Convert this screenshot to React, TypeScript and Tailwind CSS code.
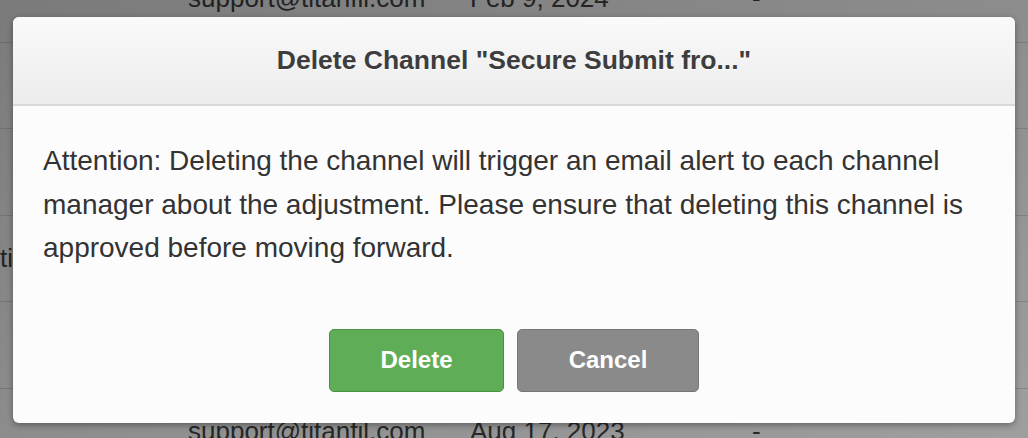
import React from "react";

const rows = [
  { a: "", email: "support@titanfil.com", date: "Feb 9, 2024", c: "-" },
  { a: "", email: "", date: "", c: "" },
  { a: "", email: "", date: "", c: "" },
  { a: "ting", email: "", date: "", c: "" },
  { a: "", email: "", date: "", c: "" },
  { a: "", email: "support@titanfil.com", date: "Aug 17, 2023", c: "-" },
];

export default function App() {
  return (
    <div className="relative h-[438px] w-[1028px] overflow-hidden bg-white" style={{ fontFamily: '"Liberation Sans", Arial, Helvetica, sans-serif' }}>
      <div className="-mt-[44px] flex flex-col">
        {rows.map((r, i) => (
          <div key={i} className="flex h-[86.5px] shrink-0 items-center whitespace-nowrap border-b border-[#dddddd] text-[26px] text-[#444]">
            <div className="w-[188px] shrink-0">
              <span>{r.a}</span>
            </div>
            <div className="w-[282px] shrink-0">{r.email}</div>
            <div className="w-[282px] shrink-0">{r.date}</div>
            <div className="shrink-0">{r.c}</div>
          </div>
        ))}
      </div>
      <div className="absolute inset-0 bg-gradient-to-br from-black/52 via-black/45 to-black/38" />
      <div className="absolute left-[13px] top-[17px] flex h-[406px] w-[1002px] flex-col overflow-hidden rounded-[6px] bg-[#fcfcfc] shadow-[0_2px_6px_rgba(0,0,0,0.35)]">
        <div className="flex h-[89px] shrink-0 items-center justify-center border-b-2 border-[#d9d9d9] bg-gradient-to-b from-[#fafafa] to-[#ececec]">
          <h2 className="text-[26.5px] font-bold text-[#3d3d3d] [text-shadow:0_1px_0_#ffffff]">Delete Channel "Secure Submit fro..."</h2>
        </div>
        <div className="flex flex-1 flex-col px-[30px] pt-[33px]">
          <p className="text-[28px] leading-[43.5px] text-[#333]">
            Attention: Deleting the channel will trigger an email alert to each channel manager about the adjustment. Please ensure that deleting this channel is approved before moving forward.
          </p>
          <div className="mt-[59px] flex justify-center gap-[13px]">
            <button className="h-[63px] w-[175px] rounded-[5px] border border-[#4b8f43] bg-[#5fad56] text-[24px] font-bold text-white">
              Delete
            </button>
            <button className="h-[63px] w-[182px] rounded-[5px] border border-[#767676] bg-[#8a8a8a] text-[24px] font-bold text-white">
              Cancel
            </button>
          </div>
        </div>
      </div>
    </div>
  );
}
